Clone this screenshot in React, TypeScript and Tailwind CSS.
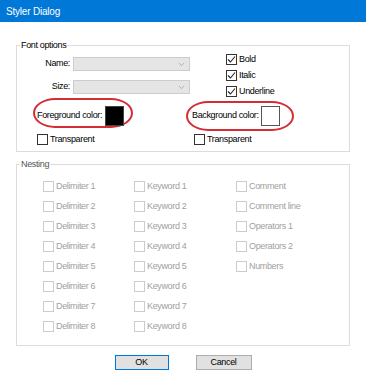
import { ChevronDown } from "lucide-react";

const nesting = [
  ["Delimiter 1", "Keyword 1", "Comment"],
  ["Delimiter 2", "Keyword 2", "Comment line"],
  ["Delimiter 3", "Keyword 3", "Operators 1"],
  ["Delimiter 4", "Keyword 4", "Operators 2"],
  ["Delimiter 5", "Keyword 5", "Numbers"],
  ["Delimiter 6", "Keyword 6", ""],
  ["Delimiter 7", "Keyword 7", ""],
  ["Delimiter 8", "Keyword 8", ""],
];

function Box({ checked = false, disabled = false }: { checked?: boolean; disabled?: boolean }) {
  return (
    <span className={`flex h-[11px] w-[11px] shrink-0 items-center justify-center border bg-white ${disabled ? "border-[#cccccc]" : "border-[#333333]"}`}>
      {checked && (
        <svg width="9" height="9" viewBox="0 0 9 9" fill="none">
          <path d="M1 4.5 L3.5 7 L8 1.5" stroke="#222" strokeWidth="1.1" />
        </svg>
      )}
    </span>
  );
}

function Check({ label, checked = false, disabled = false }: { label: string; checked?: boolean; disabled?: boolean }) {
  return (
    <div className="flex items-center gap-[2px]">
      <Box checked={checked} disabled={disabled} />
      <span className={`whitespace-nowrap leading-[12px] ${disabled ? "text-[#a0a0a0]" : "text-black"}`}>{label}</span>
    </div>
  );
}

function Combo() {
  return (
    <div className="flex h-[14px] w-[117px] items-center justify-end border border-[#cccccc] bg-[#e5e5e5] pr-[3px]">
      <ChevronDown size={9} strokeWidth={1.6} className="text-[#8a8a8a]" />
    </div>
  );
}

export default function App() {
  return (
    <div className="h-[385px] w-[366px] overflow-hidden bg-white font-['Liberation_Sans',sans-serif] text-[9px] tracking-[-0.35px] text-black">
      <div className="flex h-[22px] items-center bg-[#0078d7] pl-[6px] text-[10px] tracking-[-0.2px] text-white">
        Styler Dialog
      </div>

      <fieldset className="mx-[16px] mt-[17px] border border-[#dcdcdc] pb-[6px]">
        <legend className="ml-[3px] px-[1px] leading-[12px]">Font options</legend>
        <div className="flex">
          <div className="w-[209px]">
            <div className="mt-[6px] grid grid-cols-[53px_117px] items-center gap-x-[3px] gap-y-[9px]">
              <span className="text-right">Name:</span>
              <Combo />
              <span className="text-right">Size:</span>
              <Combo />
            </div>
          </div>
          <div className="flex flex-col">
            {["Bold", "Italic", "Underline"].map((l) => (
              <div key={l} className="flex h-[16px] items-center">
                <Check label={l} checked />
              </div>
            ))}
          </div>
        </div>

        <div className="flex items-start">
          <div className="ml-[16px] mt-[-1px] flex h-[30px] w-[100px] items-center rounded-[22px/15px] border-2 border-[#d42d35] pl-[2px] pr-[7px] pt-[6px]">
            <span className="flex-1 whitespace-nowrap">Foreground color:</span>
            <span className="h-[20px] w-[19px] border border-[#444] bg-black" />
          </div>
          <div className="ml-[53px] mt-[2px] flex h-[30px] w-[108px] items-center rounded-[22px/15px] border-2 border-[#d42d35] pl-[4px] pr-[12px]">
            <span className="flex-1 whitespace-nowrap">Background color:</span>
            <span className="h-[20px] w-[19px] border border-[#555] bg-white" />
          </div>
        </div>

        <div className="mt-[2px] flex">
          <div className="ml-[20px] w-[157px]">
            <Check label="Transparent" />
          </div>
          <Check label="Transparent" />
        </div>
      </fieldset>

      <fieldset className="mx-[16px] mt-[6px] border border-[#dcdcdc] pb-[9px]">
        <legend className="ml-[3px] px-[1px] leading-[12px] text-[#555]">Nesting</legend>
        <div className="mt-[6px] grid grid-cols-[91px_102px_1fr] pl-[26px]">
          {nesting.flat().map((l, i) => (
            <div key={i} className="flex h-[20px] items-center">
              {l && <Check label={l} disabled />}
            </div>
          ))}
        </div>
      </fieldset>

      <div className="mt-[9px] flex justify-center gap-[27px]">
        <button className="h-[15px] w-[54px] border border-[#0078d7] bg-[#e1e1e1] leading-none">OK</button>
        <button className="h-[15px] w-[56px] border border-[#adadad] bg-[#e1e1e1] leading-none">Cancel</button>
      </div>
    </div>
  );
}
